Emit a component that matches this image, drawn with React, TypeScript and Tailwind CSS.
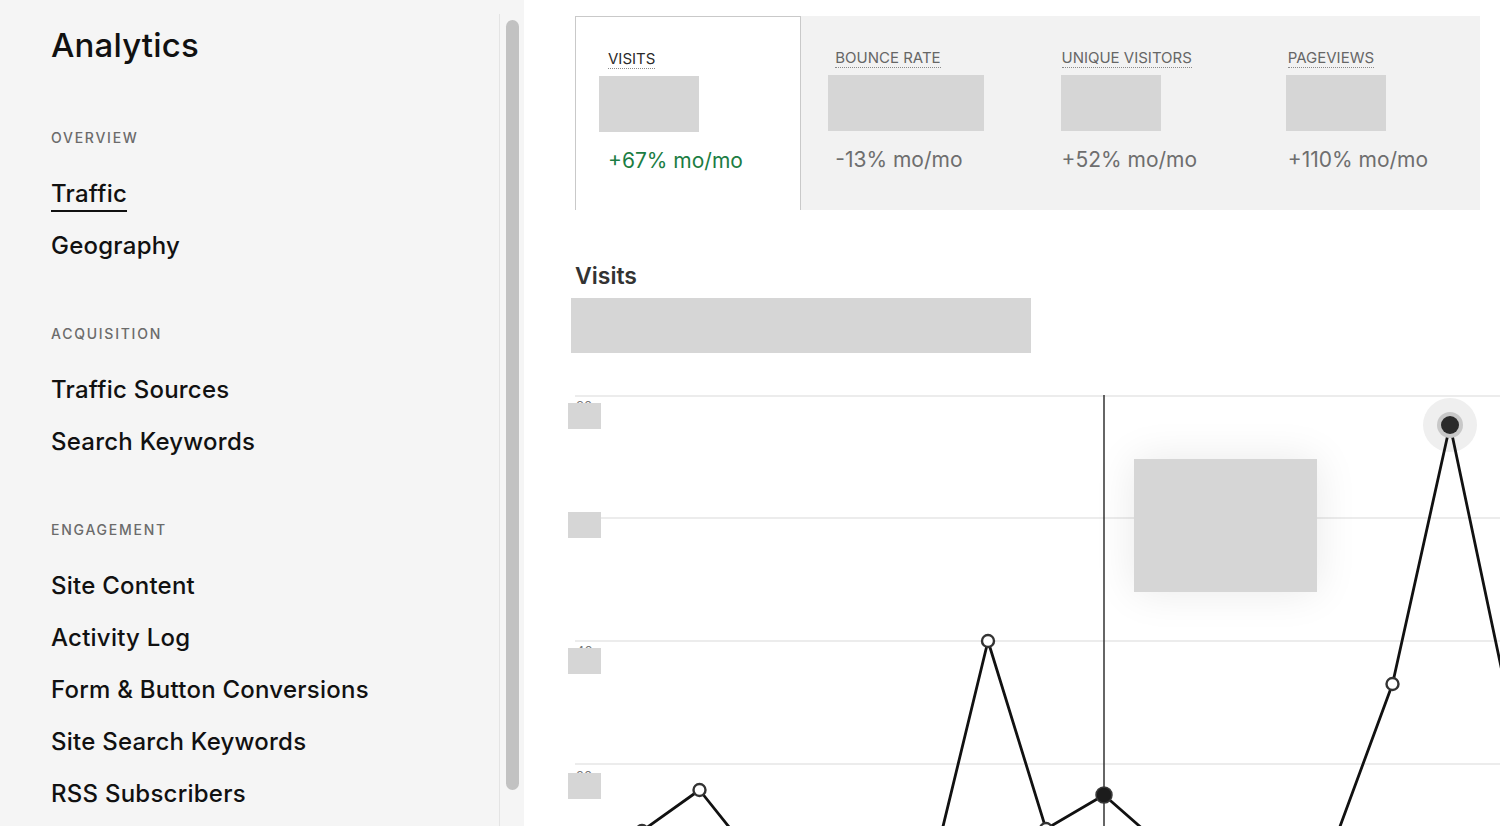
import React from "react";

const sections = [
  { title: "OVERVIEW", items: ["Traffic", "Geography"] },
  { title: "ACQUISITION", items: ["Traffic Sources", "Search Keywords"] },
  {
    title: "ENGAGEMENT",
    items: [
      "Site Content",
      "Activity Log",
      "Form & Button Conversions",
      "Site Search Keywords",
      "RSS Subscribers",
    ],
  },
];

const stats = [
  { label: "VISITS", change: "+67% mo/mo", box: "ml-[-9px] w-[100px]" },
  { label: "BOUNCE RATE", change: "-13% mo/mo", box: "ml-[-7px] w-[156px]" },
  { label: "UNIQUE VISITORS", change: "+52% mo/mo", box: "ml-[-1px] w-[100px]" },
  { label: "PAGEVIEWS", change: "+110% mo/mo", box: "ml-[-2px] w-[100px]" },
];

// chart coords, origin at the chart box's top-left
const points: [number, number][] = [
  [74, 451],
  [131.5, 410],
  [189, 482],
  [247, 500],
  [304, 490],
  [362, 500],
  [420, 261],
  [478, 449],
  [536, 415],
  [593, 465],
  [651, 500],
  [709, 500],
  [767, 460],
  [824.5, 304],
  [882, 45],
  [940, 320],
];
const gridY = [16, 138, 261, 384];
const ticks = [
  { y: 23, label: "80" },
  { y: 132, label: "" },
  { y: 268, label: "40" },
  { y: 393, label: "20" },
];

function Sidebar() {
  return (
    <aside className="flex w-[524px] shrink-0 bg-[#f5f5f5]">
      <nav className="w-[499px] pl-[51px] pt-[25px]">
        <h1 className="text-[33px] leading-[40px] font-medium tracking-[0.005em] text-[#111]">
          Analytics
        </h1>
        {sections.map((s, i) => (
          <div key={s.title} className={i === 0 ? "mt-[63px]" : "mt-[62px]"}>
            <p className="text-[14px] leading-[20px] font-medium tracking-[0.125em] text-[#6b6b6b]">
              {s.title}
            </p>
            <ul className="mt-[30px] flex flex-col gap-[20px]">
              {s.items.map((item) => (
                <li
                  key={item}
                  className="text-[24px] leading-[32px] font-medium tracking-[0.01em] text-[#111]"
                >
                  <span
                    className={
                      item === "Traffic"
                        ? "underline decoration-2 underline-offset-[8px]"
                        : ""
                    }
                  >
                    {item}
                  </span>
                </li>
              ))}
            </ul>
          </div>
        ))}
      </nav>
      <div className="mt-[14px] w-[25px] border-l border-[#e4e4e4] pl-[6px] pt-[6px]">
        <div className="h-[770px] w-[13px] rounded-full bg-[#c2c2c2]" />
      </div>
    </aside>
  );
}

function StatTabs() {
  return (
    <div className="grid h-[194px] grid-cols-4 bg-[#f2f2f2]">
      {stats.map((s, i) => (
        <div
          key={s.label}
          className={
            i === 0
              ? "border-x border-t border-[#c9c9c9] bg-white pl-[32px] pt-[32px]"
              : "pl-[34px] pt-[32px]"
          }
        >
          <div className="h-[20px] text-[15px] leading-[20px]">
            <span
              className={
                "border-b border-dotted border-[#8a8a8a] " +
                (i === 0 ? "text-[#2a2a2a]" : "text-[#666]")
              }
            >
              {s.label}
            </span>
          </div>
          <div className={"mt-[7px] h-[56px] bg-[#d6d6d6] " + s.box} />
          <p
            className={
              "mt-[15px] text-[21px] leading-[28px] " +
              (i === 0 ? "text-[#1b7d43]" : "text-[#6e6e6e]")
            }
          >
            {s.change}
          </p>
        </div>
      ))}
    </div>
  );
}

function VisitsChart() {
  const line = points.map((p) => p.join(",")).join(" ");
  return (
    <div className="relative ml-[-7px] mr-[-20px] mt-[27px] h-[446px] overflow-hidden">
      <svg width="932" height="446" className="block">
        {gridY.map((y) => (
          <line key={y} x1="7" x2="932" y1={y} y2={y} stroke="#e6e6e6" strokeWidth="1.5" />
        ))}
        {ticks.map((t) => (
          <g key={t.y}>
            <text x="8" y={t.y + 8} fontSize="13" fill="#777" fontFamily="Inter, sans-serif">
              {t.label}
            </text>
            <rect x="0" y={t.y} width="33" height="26" fill="#d6d6d6" />
          </g>
        ))}
        <line x1="536" x2="536" y1="15" y2="446" stroke="#333" strokeWidth="1.5" />
        {/* hover halo sits under the line */}
        <circle cx="882" cy="45" r="27" fill="#efefef" />
        <polyline
          points={line}
          fill="none"
          stroke="#111"
          strokeWidth="2.8"
          strokeLinejoin="round"
        />
        {points.map(([x, y], i) =>
          i === 8 || i === 14 ? null : (
            <circle key={i} cx={x} cy={y} r="6" fill="#fff" stroke="#333" strokeWidth="2.4" />
          )
        )}
        <circle cx="536" cy="415" r="8" fill="#1c1c1c" stroke="#3a3a3a" strokeWidth="1.5" />
        <circle cx="882" cy="45" r="13" fill="#c8c8c8" />
        <circle cx="882" cy="45" r="9" fill="#2a2a2a" />
      </svg>
      <div className="absolute left-[566px] top-[79px] h-[133px] w-[183px] bg-[#d6d6d6] shadow-[0_0_40px_rgba(0,0,0,0.09)]" />
    </div>
  );
}

export default function App() {
  return (
    <div className="flex h-[826px] w-full overflow-hidden bg-white font-['Inter',sans-serif]">
      <Sidebar />
      <main className="flex-1 overflow-hidden pl-[51px] pr-[20px] pt-[16px]">
        <StatTabs />
        <h2 className="mt-[51px] text-[23px] leading-[30px] font-semibold text-[#333]">Visits</h2>
        <div className="ml-[-4px] mt-[7px] h-[55px] w-[460px] bg-[#d6d6d6]" />
        <VisitsChart />
      </main>
    </div>
  );
}
